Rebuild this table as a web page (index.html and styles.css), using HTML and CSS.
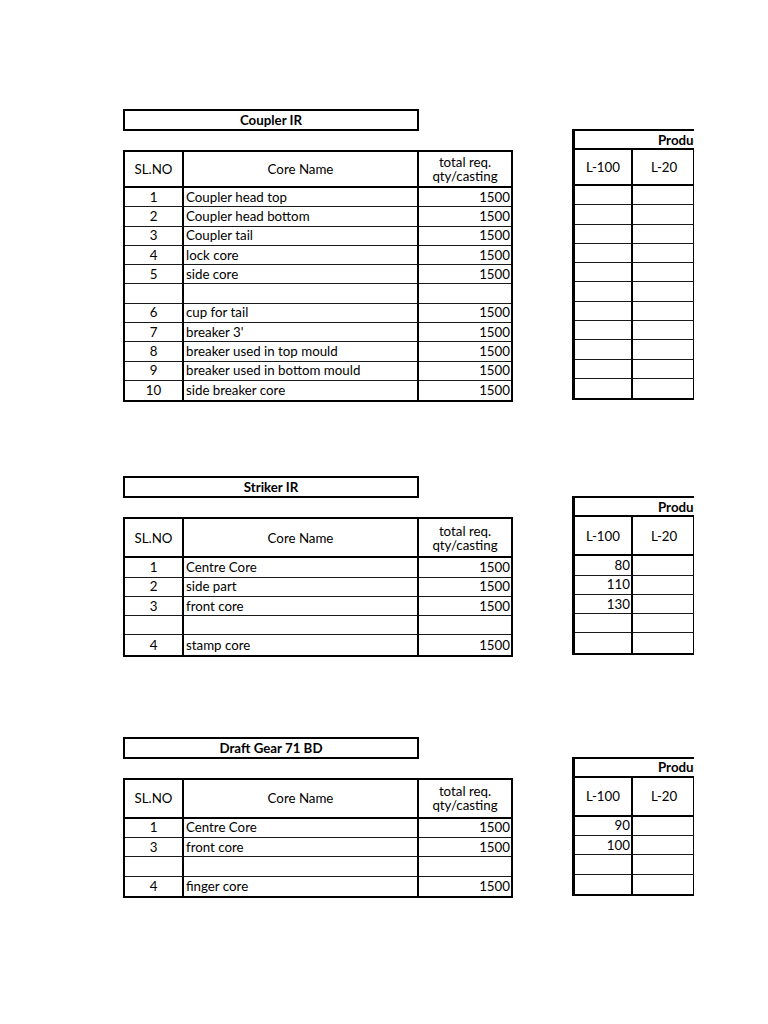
FILE: index.html
```html
<!DOCTYPE html>
<html>
<head>
<meta charset="utf-8">
<link rel="stylesheet" href="styles.css">
</head>
<body>
<div class="sheet">

  <section class="block block-first">
    <div class="left">
      <div class="title">Coupler IR</div>
      <table class="grid">
        <colgroup><col class="c-sl"><col class="c-name"><col class="c-qty"></colgroup>
        <tr class="head head-short"><th>SL.NO</th><th>Core Name</th><th>total req.<br>qty/casting</th></tr>
        <tr class="row"><td class="num">1</td><td class="name">Coupler head top</td><td class="qty">1500</td></tr>
        <tr class="row"><td class="num">2</td><td class="name">Coupler head bottom</td><td class="qty">1500</td></tr>
        <tr class="row"><td class="num">3</td><td class="name">Coupler tail</td><td class="qty">1500</td></tr>
        <tr class="row"><td class="num">4</td><td class="name">lock core</td><td class="qty">1500</td></tr>
        <tr class="row"><td class="num">5</td><td class="name">side core</td><td class="qty">1500</td></tr>
        <tr class="row"><td class="num"></td><td class="name"></td><td class="qty"></td></tr>
        <tr class="row"><td class="num">6</td><td class="name">cup for tail</td><td class="qty">1500</td></tr>
        <tr class="row"><td class="num">7</td><td class="name">breaker 3'</td><td class="qty">1500</td></tr>
        <tr class="row"><td class="num">8</td><td class="name">breaker used in top mould</td><td class="qty">1500</td></tr>
        <tr class="row"><td class="num">9</td><td class="name">breaker used in bottom mould</td><td class="qty">1500</td></tr>
        <tr class="row"><td class="num">10</td><td class="name">side breaker core</td><td class="qty">1500</td></tr>
      </table>
    </div>
    <div class="right">
      <table class="prod">
        <colgroup><col class="p-first"><col class="p-second"><col class="p-rest"><col class="p-rest"></colgroup>
        <tr class="band"><th colspan="4">Production</th></tr>
        <tr class="head head-short"><th>L-100</th><th class="l20">L-20</th><th></th><th></th></tr>
        <tr class="row"><td></td><td></td><td></td><td></td></tr>
        <tr class="row"><td></td><td></td><td></td><td></td></tr>
        <tr class="row"><td></td><td></td><td></td><td></td></tr>
        <tr class="row"><td></td><td></td><td></td><td></td></tr>
        <tr class="row"><td></td><td></td><td></td><td></td></tr>
        <tr class="row"><td></td><td></td><td></td><td></td></tr>
        <tr class="row"><td></td><td></td><td></td><td></td></tr>
        <tr class="row"><td></td><td></td><td></td><td></td></tr>
        <tr class="row"><td></td><td></td><td></td><td></td></tr>
        <tr class="row"><td></td><td></td><td></td><td></td></tr>
        <tr class="row"><td></td><td></td><td></td><td></td></tr>
      </table>
    </div>
  </section>

  <section class="block block-second">
    <div class="left">
      <div class="title">Striker IR</div>
      <table class="grid">
        <colgroup><col class="c-sl"><col class="c-name"><col class="c-qty"></colgroup>
        <tr class="head"><th>SL.NO</th><th>Core Name</th><th>total req.<br>qty/casting</th></tr>
        <tr class="row"><td class="num">1</td><td class="name">Centre Core</td><td class="qty">1500</td></tr>
        <tr class="row"><td class="num">2</td><td class="name">side part</td><td class="qty">1500</td></tr>
        <tr class="row"><td class="num">3</td><td class="name">front core</td><td class="qty">1500</td></tr>
        <tr class="row"><td class="num"></td><td class="name"></td><td class="qty"></td></tr>
        <tr class="row"><td class="num">4</td><td class="name">stamp core</td><td class="qty">1500</td></tr>
      </table>
    </div>
    <div class="right">
      <table class="prod">
        <colgroup><col class="p-first"><col class="p-second"><col class="p-rest"><col class="p-rest"></colgroup>
        <tr class="band"><th colspan="4">Production</th></tr>
        <tr class="head"><th>L-100</th><th class="l20">L-20</th><th></th><th></th></tr>
        <tr class="row"><td class="qty">80</td><td></td><td></td><td></td></tr>
        <tr class="row"><td class="qty">110</td><td></td><td></td><td></td></tr>
        <tr class="row"><td class="qty">130</td><td></td><td></td><td></td></tr>
        <tr class="row"><td></td><td></td><td></td><td></td></tr>
        <tr class="row"><td></td><td></td><td></td><td></td></tr>
      </table>
    </div>
  </section>

  <section class="block block-third">
    <div class="left">
      <div class="title">Draft Gear 71 BD</div>
      <table class="grid">
        <colgroup><col class="c-sl"><col class="c-name"><col class="c-qty"></colgroup>
        <tr class="head"><th>SL.NO</th><th>Core Name</th><th>total req.<br>qty/casting</th></tr>
        <tr class="row"><td class="num">1</td><td class="name">Centre Core</td><td class="qty">1500</td></tr>
        <tr class="row"><td class="num">3</td><td class="name">front core</td><td class="qty">1500</td></tr>
        <tr class="row"><td class="num"></td><td class="name"></td><td class="qty"></td></tr>
        <tr class="row"><td class="num">4</td><td class="name">finger core</td><td class="qty">1500</td></tr>
      </table>
    </div>
    <div class="right">
      <table class="prod">
        <colgroup><col class="p-first"><col class="p-second"><col class="p-rest"><col class="p-rest"></colgroup>
        <tr class="band"><th colspan="4">Production</th></tr>
        <tr class="head"><th>L-100</th><th class="l20">L-20</th><th></th><th></th></tr>
        <tr class="row"><td class="qty">90</td><td></td><td></td><td></td></tr>
        <tr class="row"><td class="qty">100</td><td></td><td></td><td></td></tr>
        <tr class="row"><td></td><td></td><td></td><td></td></tr>
        <tr class="row"><td></td><td></td><td></td><td></td></tr>
      </table>
    </div>
  </section>

</div>
</body>
</html>
```

FILE: styles.css
```css
* {
  box-sizing: border-box;
}

html, body {
  margin: 0;
  padding: 0;
  background: #ffffff;
}

body {
  font-family: Lato, "Liberation Sans", sans-serif;
  font-size: 13.3px;
  color: #000;
  width: 768px;
  height: 1024px;
  overflow: hidden;
}

.sheet {
  width: 694px;
  overflow: hidden;
  padding: 109px 0 0 123px;
}

.block {
  display: flex;
  align-items: flex-start;
}

.block-second {
  margin-top: 74px;
}

.block-third {
  margin-top: 80px;
}

.left {
  width: 390px;
  flex: none;
}

.right {
  flex: none;
  margin-left: 59px;
  margin-top: 20px;
}

.title {
  width: 296px;
  height: 22px;
  border: 2px solid #000;
  font-weight: 700;
  text-align: center;
  line-height: 18px;
}

table {
  border-spacing: 0;
  border-collapse: separate;
  table-layout: fixed;
}

.grid {
  margin-top: 19px;
  width: 390px;
  border: 2px solid #000;
}

.c-sl { width: 59px; }
.c-name { width: 235px; }
.c-qty { width: 92px; }

th, td {
  padding: 0;
  border-right: 2px solid #000;
  border-bottom: 1px solid #1a1a1a;
  white-space: nowrap;
  overflow: hidden;
}

th {
  font-weight: 400;
  text-align: center;
  vertical-align: middle;
  line-height: 14px;
}

th:last-child, td:last-child {
  border-right: none;
}

.grid tr:last-child td,
.prod tr:last-child td {
  border-bottom: none;
}

.head th {
  height: 39px;
  border-bottom: 2px solid #000;
}

.head-short th {
  height: 36px;
}

.row td {
  height: 19.3px;
  line-height: 17px;
  vertical-align: middle;
}

td.num {
  text-align: center;
}

td.name {
  text-align: left;
  padding-left: 2px;
}

td.qty {
  text-align: right;
  padding-right: 1px;
}

.prod {
  width: 303px;
  border-top: 2px solid #000;
  border-left: 3px solid #000;
  border-bottom: 2px solid #000;
}

.p-first { width: 58px; }
.p-second { width: 62px; }
.p-rest { width: 90px; }

.prod th.l20 {
  text-align: left;
  padding-left: 18px;
}

.band th {
  height: 19px;
  border-bottom: 2px solid #000;
  font-weight: 700;
  text-align: left;
  padding-left: 83px;
}
```
